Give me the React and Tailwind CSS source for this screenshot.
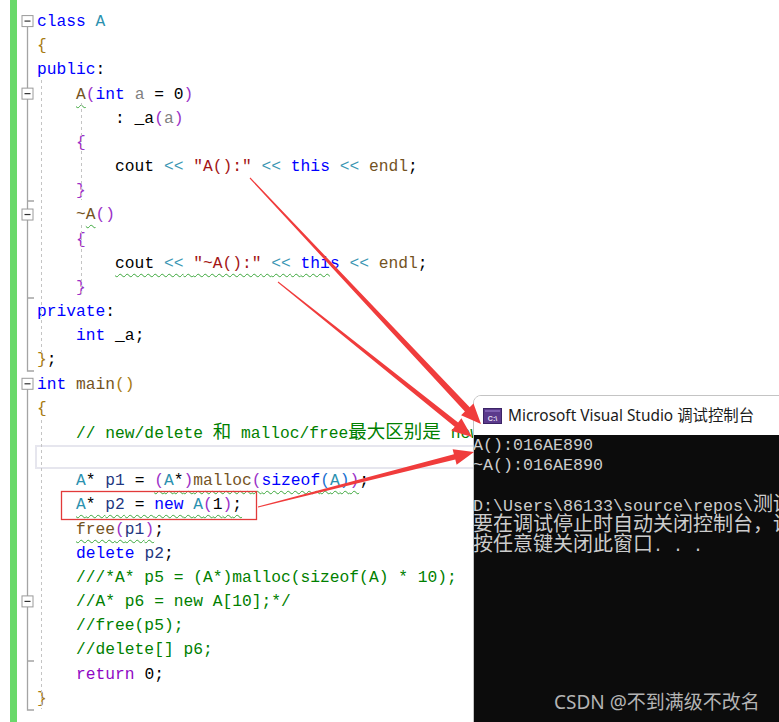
import React from 'react';

// token colours (VS light theme)
const K = 'text-[#0000ff]';
const T = 'text-[#2b91af]';
const F = 'text-[#74531f]';
const S = 'text-[#a31515]';
const C = 'text-[#008000]';
const O = 'text-[#3b97b4]';
const P = 'text-[#808080]';
const V = 'text-[#1f377f]';
const R = 'text-[#8f08c4]';
const B1 = 'text-[#a87b12]';
const B2 = 'text-[#9b30c8]';
const B3 = 'text-[#1a6fd0]';

const LH = 24.18;

const t = (cls, text) => <span className={cls}>{text}</span>;
const cjk = (text) => (
    <span className="text-[18.5px] leading-none" style={{ fontFamily: '"Noto Sans CJK SC", sans-serif' }}>{text}</span>
);
const squig = (...kids) => (
    <span className="underline decoration-wavy decoration-[#3aa63a] decoration-1 underline-offset-[5px]">{kids}</span>
);

const lines = [
    [t(K, 'class'), ' ', t(T, 'A')],
    [t(B1, '{')],
    [t(K, 'public'), ':'],
    ['    ', squig(t(F, 'A')), t(B2, '('), t(K, 'int'), ' ', t(P, 'a'), ' = 0', t(B2, ')')],
    ['        : _a', t(B2, '('), t(P, 'a'), t(B2, ')')],
    ['    ', t(B2, '{')],
    ['        cout ', t(O, '<<'), ' ', t(S, '"A():"'), ' ', t(O, '<<'), ' ', t(K, 'this'), ' ', t(O, '<<'), ' ', t(F, 'endl'), ';'],
    ['    ', t(B2, '}')],
    ['    ', t(F, '~'), squig(t(F, 'A')), t(B2, '()')],
    ['    ', t(B2, '{')],
    ['        ', squig('cout ', t(O, '<<'), ' ', t(S, '"~A():"'), ' ', t(O, '<<'), ' ', t(K, 'thi')), t(K, 's'), ' ', t(O, '<<'), ' ', t(F, 'endl'), ';'],
    ['    ', t(B2, '}')],
    [t(K, 'private'), ':'],
    ['    ', t(K, 'int'), ' _a;'],
    [t(B1, '}'), ';'],
    [t(K, 'int'), ' ', t(F, 'main'), t(B1, '()')],
    [t(B1, '{')],
    ['    ', <span className={C}>// new/delete {cjk('和')} malloc/free{cjk('最大区别是')} new/delete{cjk('会调用构造函数和析构函数')}</span>],
    null,
    ['    ', t(T, 'A'), '* ', t(V, 'p1'), ' = ', squig(t(B2, '('), t(T, 'A'), '*', t(B2, ')'), t(F, 'malloc'), t(B2, '('), t(K, 'sizeof'), t(B3, '('), t(T, 'A'), t(B3, ')'), t(B2, ')')), ';'],
    ['    ', squig(t(T, 'A'), '* ', t(V, 'p2'), ' = ', t(K, 'new'), ' ', t(T, 'A'), t(B2, '('), '1', t(B2, ')'), ';')],
    ['    ', squig(t(F, 'free'), t(B2, '('), t(V, 'p1'), t(B2, ')')), ';'],
    ['    ', t(K, 'delete'), ' ', t(V, 'p2'), ';'],
    ['    ', t(C, '///*A* p5 = (A*)malloc(sizeof(A) * 10);')],
    ['    ', t(C, '//A* p6 = new A[10];*/')],
    ['    ', t(C, '//free(p5);')],
    ['    ', t(C, '//delete[] p6;')],
    ['    ', t(R, 'return'), ' 0;'],
    [t(B1, '}')],
];

const rowMid = (i) => 8 + LH * i + LH / 2;

const FoldGutter = () => {
    const boxes = [0, 3, 8, 15, 24];
    return (
        <svg className="absolute left-0 top-0 pointer-events-none" width="100" height="722">
            <g stroke="#a4a4a4" strokeWidth="1.3" fill="none">
                <path d="M27.5 27 V371 H34 M27.5 201 H34 M27.5 298 H34" />
                <path d="M27.5 389 V710 H34 M27.5 661 H34" />
            </g>
            <g stroke="#c4c4c4" strokeWidth="1" strokeDasharray="3 3">
                <path d="M41.5 80 V356 M41.5 420 V709" />
                <path d="M81.5 103 V200 M81.5 225 V296" />
            </g>
            {boxes.map((i) => {
                const cy = rowMid(i) + 1;
                return (
                    <g key={i}>
                        <rect x="22" y={cy - 5.5} width="11" height="11" fill="#fff" stroke="#9a9a9a" />
                        <path d={`M24.5 ${cy} H30.5`} stroke="#333" strokeWidth="1.2" />
                    </g>
                );
            })}
        </svg>
    );
};

const arrowPoints = (x1, y1, x2, y2, w0, w1, hl, hw) => {
    const dx = x2 - x1, dy = y2 - y1;
    const len = Math.hypot(dx, dy);
    const ux = dx / len, uy = dy / len;
    const nx = -uy, ny = ux;
    const bx = x2 - ux * hl, by = y2 - uy * hl;
    const p = [
        [x1 + nx * w0 / 2, y1 + ny * w0 / 2],
        [bx + nx * w1 / 2, by + ny * w1 / 2],
        [bx + nx * hw / 2, by + ny * hw / 2],
        [x2, y2],
        [bx - nx * hw / 2, by - ny * hw / 2],
        [bx - nx * w1 / 2, by - ny * w1 / 2],
        [x1 - nx * w0 / 2, y1 - ny * w0 / 2],
    ];
    return p.map(([a, b]) => `${a.toFixed(1)},${b.toFixed(1)}`).join(' ');
};

const Annotations = () => (
    <svg className="absolute left-0 top-0 pointer-events-none" width="779" height="722">
        <rect x="61.5" y="491.5" width="195" height="28" fill="none" stroke="#e23a3a" strokeWidth="1.3" />
        <g fill="#f03c3c">
            <polygon points={arrowPoints(250, 178, 481, 424, 1.2, 6.5, 20, 17)} />
            <polygon points={arrowPoints(278, 282, 472, 437, 1, 5.5, 20, 16)} />
            <polygon points={arrowPoints(258, 507, 474, 452, 1.2, 5.5, 20, 16)} />
        </g>
    </svg>
);

const ConsoleWindow = () => (
    <div className="absolute left-[473px] top-[395px] w-[330px] h-[340px] rounded-tl-[8px] border border-[#c4c4c4] bg-white overflow-hidden flex flex-col">
        <div className="h-[39px] flex items-center gap-[6px] pl-[9px] bg-white shrink-0">
            <svg width="19" height="16" viewBox="0 0 19 16">
                <rect x="0.5" y="0.5" width="18" height="15" fill="#5b3a8c" stroke="#3b2466" />
                <rect x="2" y="2" width="15" height="2" fill="#7d5fb0" />
                <text x="9.5" y="12.5" textAnchor="middle" fontSize="7" fill="#e8e0f5" fontFamily="Liberation Sans, sans-serif" fontWeight="bold">C:\</text>
            </svg>
            <span className="text-[15.4px] text-[#1a1a1a] whitespace-nowrap" style={{ fontFamily: '"Noto Sans", "Noto Sans CJK SC", sans-serif' }}>
                Microsoft Visual Studio 调试控制台
            </span>
        </div>
        <div
            className="flex-1 bg-[#0c0c0c] text-[#cccccc] text-[16.67px] leading-[20px] whitespace-pre pt-[1px] -ml-px"
            style={{ fontFamily: '"Liberation Mono", "Noto Sans CJK SC", monospace' }}
        >
            <div className="h-[20px]">A():016AE890</div>
            <div className="h-[20px]">~A():016AE890</div>
            <div className="h-[20px]"></div>
            <div className="h-[20px]">D:\Users\86133\source\repos\<span className="text-[20px] leading-none">测试</span></div>
            <div className="h-[20px]"><span className="text-[20px] leading-none">要在调试停止时自动关闭控制台，请启用</span></div>
            <div className="h-[20px]"><span className="text-[20px] leading-none">按任意键关闭此窗口</span>. . .</div>
        </div>
    </div>
);

export default function App() {
    return (
        <div className="relative w-[779px] h-[722px] overflow-hidden bg-white">
            <div className="flex h-full">
                <div className="w-[10px] shrink-0" />
                <div className="w-[7px] shrink-0 bg-[#69d96a]" />
                <div className="w-[20px] shrink-0" />
                <div
                    className="flex-1 pt-[10px] text-[16.28px] text-black whitespace-pre"
                    style={{ fontFamily: '"Liberation Mono", "Noto Sans CJK SC", monospace' }}
                >
                    {lines.map((ln, i) =>
                        ln === null ? (
                            <div key={i} className="h-[24.18px] w-[800px] -ml-[2px] border-2 border-[#e6e6ee]" />
                        ) : (
                            <div key={i} className="h-[24.18px] leading-[24.18px]">{ln}</div>
                        )
                    )}
                </div>
            </div>
            <FoldGutter />
            <ConsoleWindow />
            <Annotations />
            <div
                className="absolute left-[554px] top-[688px] text-[19px] text-[#b4b4b4] whitespace-nowrap"
                style={{ fontFamily: '"Noto Sans", "Noto Sans CJK SC", sans-serif' }}
            >
                CSDN @不到满级不改名
            </div>
        </div>
    );
}
